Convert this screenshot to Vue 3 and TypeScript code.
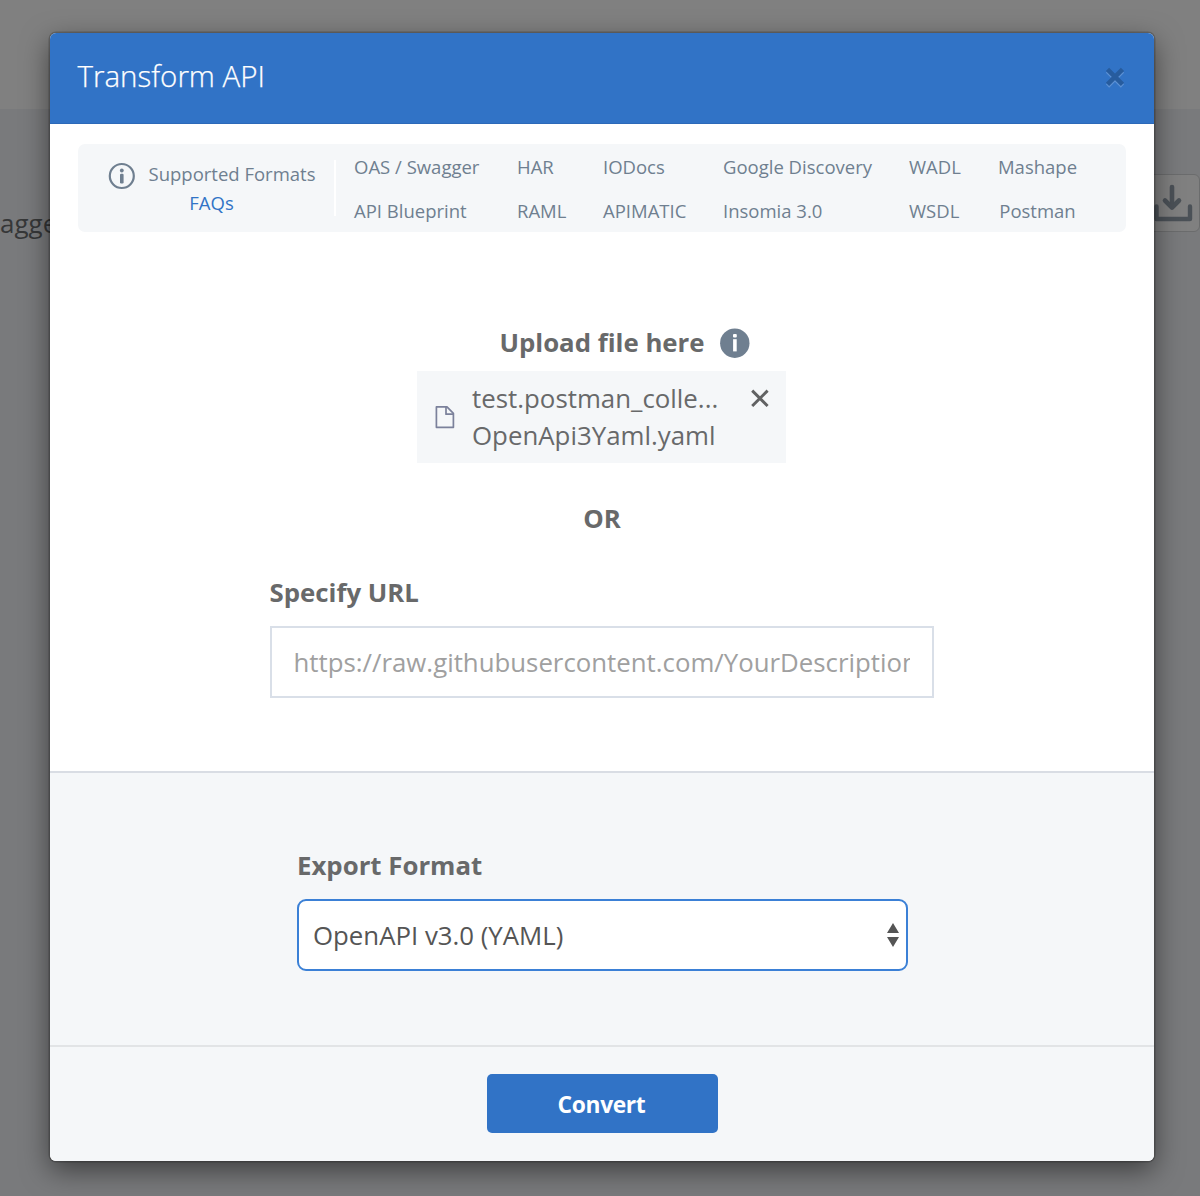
<script setup lang="ts">
import { ref } from 'vue'

interface FormatColumn {
  width: number
  items: [string, string]
}

const columns: FormatColumn[] = [
  { width: 163, items: ['OAS / Swagger', 'API Blueprint'] },
  { width: 86, items: ['HAR', 'RAML'] },
  { width: 120, items: ['IODocs', 'APIMATIC'] },
  { width: 186, items: ['Google Discovery', 'Insomia 3.0'] },
  { width: 89, items: ['WADL', 'WSDL'] },
  { width: 79, items: ['Mashape', 'Postman'] },
]

const files: string[] = ['test.postman_colle...', 'OpenApi3Yaml.yaml']
const url = ref('')
const exportFormat = ref('OpenAPI v3.0 (YAML)')
</script>

<template>
  <div class="page">
    <div class="page-top"></div>
    <div class="page-row">
      <span class="page-text">agger</span>
      <div class="download">
        <svg width="44" height="42" viewBox="0 0 44 42" fill="none" stroke="#4b5157" stroke-linejoin="round">
          <path d="M3.5 22.5V35H37V22.5" stroke-width="4.4" stroke-linecap="round" />
          <path d="M19 3V22" stroke-width="4.6" stroke-linecap="round" />
          <path d="M12 16.5L19 23.5L26 16.5" stroke-width="4.6" stroke-linecap="round" />
        </svg>
      </div>
    </div>

    <div class="modal">
      <header class="head">
        <h1 class="title">Transform API</h1>
        <button class="close" aria-label="Close">
          <svg width="22" height="22" viewBox="0 0 22 22" fill="none" stroke-width="4.6">
            <path d="M3.5 5L18.5 20M18.5 5L3.5 20" stroke="#5b90d4" />
            <path d="M3.5 3.4L18.5 18.4M18.5 3.4L3.5 18.4" stroke="#275c9e" />
          </svg>
        </button>
      </header>

      <section class="body">
        <div class="formats">
          <svg class="info" width="28" height="28" viewBox="0 0 28 28">
            <circle cx="13.8" cy="14" r="12" fill="none" stroke="#6f7f90" stroke-width="2.2" />
            <circle cx="13.8" cy="8.5" r="1.9" fill="#6f7f90" />
            <rect x="12" y="11.8" width="3.6" height="9.6" rx="1.2" fill="#6f7f90" />
          </svg>
          <div class="supported">
            <span>Supported Formats</span>
            <a class="faq">FAQs</a>
          </div>
          <div class="divider"></div>
          <div class="columns">
            <div v-for="c in columns" :key="c.items[0]" class="column" :style="{ width: c.width + 'px' }">
              <span v-for="i in c.items" :key="i">{{ i }}</span>
            </div>
          </div>
        </div>

        <div class="upload-label">
          <span class="label">Upload file here</span>
          <svg width="30" height="30" viewBox="0 0 30 30">
            <circle cx="14.8" cy="15.2" r="14.7" fill="#6f7f90" />
            <rect x="13" y="6" width="3.8" height="3.4" rx="1" fill="#fff" />
            <rect x="13.1" y="11.2" width="3.6" height="12.2" fill="#fff" />
          </svg>
        </div>

        <div class="files">
          <svg class="doc" width="20" height="24" viewBox="0 0 20 24" fill="none" stroke="#7b819b" stroke-width="1.7" stroke-linejoin="round">
            <path d="M1.4 1.9H12L18.4 8.4V22.3H1.4Z" />
            <path d="M11 2V9.2H18.4" />
          </svg>
          <div class="names">
            <span v-for="f in files" :key="f">{{ f }}</span>
          </div>
          <svg class="remove" width="18" height="18" viewBox="0 0 18 18" stroke="#616263" stroke-width="2.9">
            <path d="M1.2 1.6L16.6 17M16.6 1.6L1.2 17" />
          </svg>
        </div>

        <div class="label or">OR</div>

        <div class="url-block">
          <label class="label" for="url">Specify URL</label>
          <input id="url" v-model="url" class="url" placeholder="https://raw.githubusercontent.com/YourDescription" />
        </div>
      </section>

      <section class="export">
        <span class="label">Export Format</span>
        <div class="select" tabindex="0">
          <span>{{ exportFormat }}</span>
          <svg width="12" height="24" viewBox="0 0 12 24" fill="#555">
            <path d="M6 0L12 10H0ZM0 14H12L6 24Z" />
          </svg>
        </div>
      </section>

      <footer class="foot">
        <button class="convert">Convert</button>
      </footer>
    </div>
  </div>
</template>

<style>
body {
  overflow: hidden;
}
</style>

<style scoped>
* {
  box-sizing: border-box;
}
.page {
  position: relative;
  width: 1200px;
  height: 1196px;
  overflow: hidden;
  background: #797a7c;
  font-family: 'Open Sans', 'Noto Sans', sans-serif;
  color: #68696a;
}
.page-top {
  height: 109px;
  background: #808080;
}
.page-row {
  display: flex;
  justify-content: space-between;
  align-items: flex-start;
  padding-top: 65px;
}
.page-text {
  margin: 27px 0 0;
  font-size: 26px;
  line-height: 44px;
  color: #363738;
}
.download {
  width: 70px;
  height: 58px;
  padding: 9px 0 0 22px;
  border: 1.5px solid #6b6c6d;
  border-radius: 6px;
  background: #808080;
}
.modal {
  position: absolute;
  left: 50px;
  top: 33px;
  width: 1104px;
  height: 1128px;
  display: flex;
  flex-direction: column;
  overflow: hidden;
  border-radius: 6px;
  background: #fff;
  box-shadow: 0 0 0 1.5px rgba(0, 0, 0, 0.2), 0 9px 28px rgba(0, 0, 0, 0.5);
}
.head {
  flex: none;
  display: flex;
  justify-content: space-between;
  align-items: flex-start;
  height: 91px;
  padding: 22px 28px 0 27.5px;
  background: #3173c6;
  border-bottom: 1px solid #2c69b8;
}
.title {
  margin: 0;
  font-size: 29.5px;
  font-weight: 300;
  line-height: 42px;
  color: #fff;
  -webkit-text-stroke: 0.25px #fff;
}
button {
  border: 0;
  padding: 0;
  font-family: inherit;
}
.close {
  width: 22px;
  height: 22px;
  margin-top: 11px;
  background: none;
}
.body {
  flex: none;
  height: 647px;
  padding-top: 20px;
  display: flex;
  flex-direction: column;
  align-items: center;
}
.formats {
  display: flex;
  align-items: flex-start;
  width: 1048px;
  height: 88px;
  padding-left: 30px;
  border-radius: 7px;
  background: #f5f7f9;
  font-size: 18.5px;
  color: #6f7f90;
}
.info {
  margin-top: 18px;
}
.supported {
  display: flex;
  flex-direction: column;
  align-items: center;
  width: 168px;
  margin: 15px 0 0 12px;
  line-height: 30px;
  white-space: nowrap;
}
.faq {
  margin-top: -1px;
  padding-right: 41px;
  color: #3173c6;
}
.divider {
  width: 2px;
  height: 56px;
  margin: 16px 0 0 18px;
  background: #fff;
}
.columns {
  display: flex;
  margin: 1px 0 0 18px;
}
.column {
  display: flex;
  flex-direction: column;
  line-height: 44px;
  white-space: nowrap;
}
.column:last-child {
  align-items: center;
}
.label {
  font-size: 25.8px;
  font-weight: 700;
  line-height: 34px;
  white-space: nowrap;
}
.upload-label {
  display: flex;
  align-items: center;
  gap: 15px;
  height: 36px;
  margin: 93px 0 0 45px;
}
.upload-label .label {
  margin-top: -2px;
}
.files {
  display: flex;
  align-items: flex-start;
  width: 369px;
  height: 92px;
  margin: 10px 1px 0 0;
  padding-left: 18px;
  background: #f5f7f9;
}
.doc {
  margin-top: 34px;
}
.names {
  display: flex;
  flex-direction: column;
  width: 263px;
  margin: 9px 0 0 17px;
  font-size: 25.85px;
  line-height: 37px;
  white-space: nowrap;
}
.remove {
  margin: 18px 0 0 16px;
}
.or {
  margin-top: 38px;
}
.url-block {
  display: flex;
  flex-direction: column;
  align-items: flex-start;
  width: 664px;
  margin-top: 40px;
}
.url-block .label {
  margin-left: -0.5px;
}
.url {
  width: 664px;
  height: 72px;
  margin-top: 17px;
  padding: 0 22px 0 21.5px;
  border: 2px solid #d9dfe8;
  outline: 0;
  font-family: inherit;
  font-size: 25.8px;
  color: #555;
}
.url::placeholder {
  color: #a0a0a0;
  opacity: 1;
}
.export {
  flex: none;
  display: flex;
  flex-direction: column;
  align-items: flex-start;
  height: 274px;
  padding: 75px 0 0 247px;
  background: #f5f7f9;
  border-top: 2px solid #d9dde4;
}
.select {
  display: flex;
  align-items: center;
  justify-content: space-between;
  width: 611px;
  height: 72px;
  margin-top: 17px;
  padding: 0 7px 0 14px;
  border: 2px solid #3b80d6;
  border-radius: 9px;
  background: #fff;
  font-size: 25.8px;
  color: #555;
}
.foot {
  flex: 1;
  display: flex;
  justify-content: center;
  padding: 27px 0 0 1px;
  background: #f5f7f9;
  border-top: 2px solid #e2e4e6;
}
.convert {
  width: 231px;
  height: 59px;
  padding: 2px 2px 0 0;
  border-radius: 5px;
  background: #3173c6;
  color: #fff;
  font-size: 22.8px;
  font-weight: 700;
  letter-spacing: -0.35px;
}
</style>
